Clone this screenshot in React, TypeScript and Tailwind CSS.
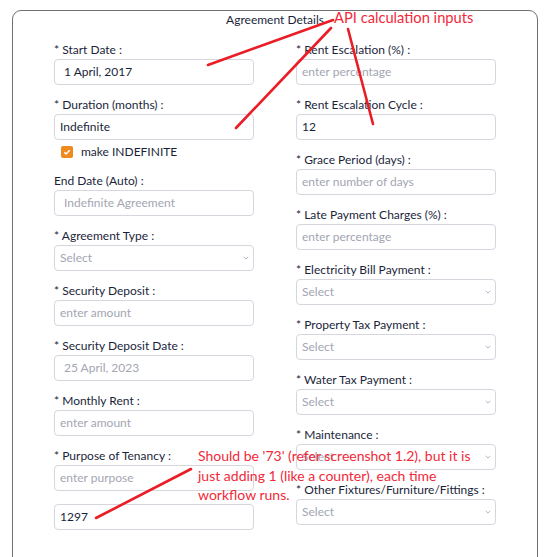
import type { ReactNode } from "react";

const labelCls = "h-[16px] leading-[16px] mb-px text-[12px] text-[#1b1f3b] whitespace-nowrap";
const boxCls =
  "flex h-[26px] items-center rounded-[4px] border border-[#d6d6de] bg-white text-[12px]";

function Field({ label, children, className = "mb-[12px]" }: { label: string; children: ReactNode; className?: string }) {
  return (
    <div className={className}>
      <div className={labelCls}>{label}</div>
      {children}
    </div>
  );
}

function TextBox({ value, placeholder, indent = "px-[5px]" }: { value?: string; placeholder?: string; indent?: string }) {
  return (
    <div className={`${boxCls} ${indent}`}>
      {value ? (
        <span className="text-[#1b1f3b]">{value}</span>
      ) : (
        <span className="text-[#a3a6b3]">{placeholder}</span>
      )}
    </div>
  );
}

function SelectBox() {
  return (
    <div className={`${boxCls} justify-between pl-[5px] pr-[4px]`}>
      <span className="text-[#a3a6b3]">Select</span>
      <svg width="6" height="4" viewBox="0 0 6 4" fill="none">
        <path d="M0.7 0.8l2.3 2.3 2.3-2.3" stroke="#b4b6c0" strokeWidth="1" />
      </svg>
    </div>
  );
}

export default function App() {
  return (
    <div className="relative h-[557px] w-[550px] overflow-hidden bg-white font-['Lato',sans-serif]">
      <div className="ml-[12px] mt-[10px] w-[526px] rounded-[9px] border-[1.5px] border-[#6f6f6f] px-[41px] pb-[60px]">
        <div className="text-center text-[12px] leading-[17px] text-[#1b1f3b]">Agreement Details</div>

        <div className="mt-[14px] grid grid-cols-2 gap-x-[42px]">
          <div>
            <Field label="* Start Date :">
              <TextBox value="1 April, 2017" indent="px-[9px]" />
            </Field>
            <Field label="* Duration (months) :" className="">
              <TextBox value="Indefinite" />
            </Field>
            <label className="ml-[7px] mt-[6px] mb-[15px] flex h-[12px] items-center gap-[8px] text-[12px] text-[#1b1f3b]">
              <span className="flex h-[12px] w-[12px] items-center justify-center rounded-[2px] bg-[#ef8a1f]">
                <svg width="8" height="8" viewBox="0 0 8 8" fill="none">
                  <path d="M1.3 4.2l1.8 1.8 3.6-3.8" stroke="white" strokeWidth="1.5" />
                </svg>
              </span>
              make INDEFINITE
            </label>
            <Field label="End Date (Auto) :">
              <TextBox placeholder="Indefinite Agreement" indent="px-[9px]" />
            </Field>
            <Field label="* Agreement Type :">
              <SelectBox />
            </Field>
            <Field label="* Security Deposit :">
              <TextBox placeholder="enter amount" />
            </Field>
            <Field label="* Security Deposit Date :">
              <TextBox placeholder="25 April, 2023" indent="px-[9px]" />
            </Field>
            <Field label="* Monthly Rent :">
              <TextBox placeholder="enter amount" />
            </Field>
            <Field label="* Purpose of Tenancy :" className="mb-[13px]">
              <TextBox placeholder="enter purpose" />
            </Field>
            <TextBox value="1297" />
          </div>

          <div>
            <Field label="* Rent Escalation (%) :">
              <TextBox placeholder="enter percentage" />
            </Field>
            <Field label="* Rent Escalation Cycle :">
              <TextBox value="12" />
            </Field>
            <Field label="* Grace Period (days) :">
              <TextBox placeholder="enter number of days" />
            </Field>
            <Field label="* Late Payment Charges (%) :">
              <TextBox placeholder="enter percentage" />
            </Field>
            <Field label="* Electricity Bill Payment :">
              <SelectBox />
            </Field>
            <Field label="* Property Tax Payment :">
              <SelectBox />
            </Field>
            <Field label="* Water Tax Payment :">
              <SelectBox />
            </Field>
            <Field label="* Maintenance :">
              <SelectBox />
            </Field>
            <Field label="* Other Fixtures/Furniture/Fittings :">
              <SelectBox />
            </Field>
          </div>
        </div>
      </div>

      {/* red review annotations drawn over the form */}
      <svg className="pointer-events-none absolute left-0 top-0" width="550" height="557">
        <g stroke="#ea1c26" strokeWidth="2.6" strokeLinecap="round">
          <line x1="333" y1="20" x2="208" y2="65" />
          <line x1="331" y1="28" x2="236" y2="128" />
          <line x1="348" y1="29" x2="373" y2="124" />
          <line x1="191" y1="469" x2="96" y2="518" />
        </g>
      </svg>
      <div className="pointer-events-none absolute left-[334px] top-[8px] text-[14.7px] leading-[18px] text-[#f2293a]">
        API calculation inputs
      </div>
      <div className="pointer-events-none absolute left-[198px] top-[446px] w-[300px] text-[14px] leading-[19.5px] text-[#f2293a]">
        Should be '73' (refer screenshot 1.2), but it is
        <br />
        just adding 1 (like a counter), each time
        <br />
        workflow runs.
      </div>
    </div>
  );
}
